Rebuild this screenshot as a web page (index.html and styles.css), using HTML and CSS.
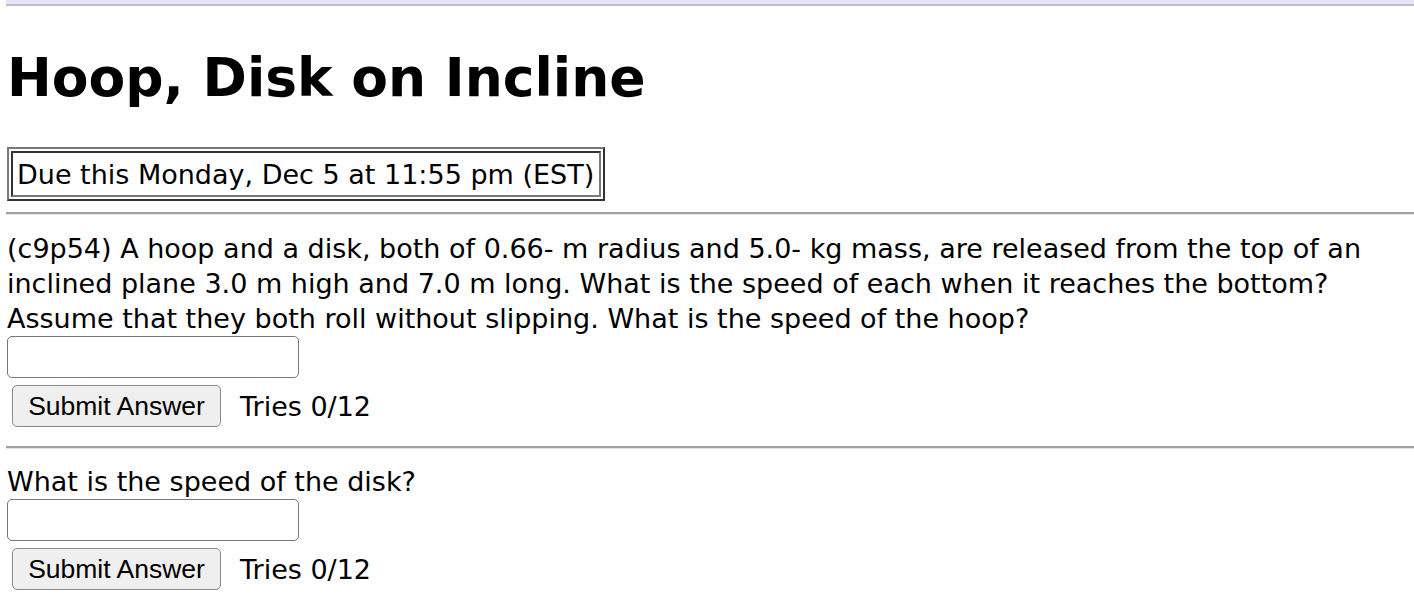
FILE: index.html
```html
<!DOCTYPE html>
<html>
<head>
<meta charset="utf-8">
<title>Hoop, Disk on Incline</title>
<link rel="stylesheet" href="styles.css">
</head>
<body>
<div class="topbar"></div>
<h1 class="title">Hoop, Disk on Incline</h1>
<div class="due-outer"><div class="due-inner">Due this Monday, Dec 5 at 11:55 pm (EST)</div></div>
<div class="rule rule-first"></div>
<div class="question">(c9p54) A hoop and a disk, both of 0.66- m radius and 5.0- kg mass, are released from the top of an inclined plane 3.0 m high and 7.0 m long. What is the speed of each when it reaches the bottom? Assume that they both roll without slipping. What is the speed of the hoop?</div>
<div class="answer"><input class="field" type="text"></div>
<div class="submit-row"><button class="submit">Submit Answer</button><span class="tries">Tries 0/12</span></div>
<div class="rule rule-second"></div>
<div class="question question-second">What is the speed of the disk?</div>
<div class="answer"><input class="field" type="text"></div>
<div class="submit-row"><button class="submit">Submit Answer</button><span class="tries">Tries 0/12</span></div>
</body>
</html>
```
FILE: styles.css
```css
html, body {
  margin: 0;
  padding: 0;
  background: #ffffff;
}
body {
  padding-left: 7px;
  font-family: "DejaVu Sans", Verdana, sans-serif;
  font-size: 27px;
  color: #000;
}
.topbar {
  margin-left: -1px;
  height: 4px;
  background: #e6e6fa;
  border-bottom: 2px solid #c0c0c0;
}
.title {
  margin: 0;
  padding-top: 40px;
  font-family: "DejaVu Sans", Verdana, sans-serif;
  font-weight: bold;
  font-size: 53.5px;
  line-height: 64px;
}
.due-outer {
  display: inline-block;
  margin-top: 37px;
  padding: 2px;
  border: 2px solid;
  border-color: #7a7a7a #333333 #333333 #7a7a7a;
}
.due-inner {
  padding: 5px 5px 3px 4px;
  border: 2px solid;
  border-color: #333333 #7a7a7a #7a7a7a #333333;
  line-height: 34px;
  white-space: nowrap;
}
.rule {
  margin-left: -1px;
  height: 0;
  border-top: 2px solid #a2a2a2;
  border-bottom: 1px solid #e4e4e4;
}
.rule-first {
  margin-top: 11px;
}
.question {
  max-width: 1380px;
  margin-top: 16px;
  line-height: 35px;
}
.question-second {
  margin-top: 15px;
}
.answer {
  height: 42px;
}
.field {
  box-sizing: border-box;
  width: 292px;
  height: 42px;
  margin: 0;
  border: 1.5px solid #777777;
  border-radius: 5px;
  background: #fff;
  padding: 0 6px;
  font-size: 24px;
}
.submit-row {
  display: flex;
  align-items: center;
  gap: 19px;
  margin-top: 7px;
  padding-left: 5px;
}
.submit {
  box-sizing: border-box;
  width: 209px;
  height: 42px;
  padding: 0;
  border: 1.5px solid #8a8a8a;
  border-radius: 5px;
  background: #efefef;
  font-family: "Liberation Sans", Arial, sans-serif;
  font-size: 26.5px;
  color: #000;
}
.tries {
  line-height: 35px;
}
.rule-second {
  margin-top: 19px;
}
```
